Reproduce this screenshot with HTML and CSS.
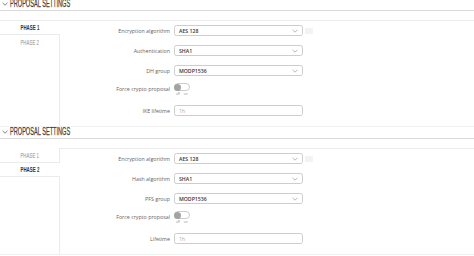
FILE: index.html
```html
<!DOCTYPE html>
<html>
<head>
<meta charset="utf-8">
<link rel="stylesheet" href="styles.css">
</head>
<body>
<section class="sec">
  <div class="sec-head">
    <svg class="chev" width="6" height="4" viewBox="0 0 6 4"><path d="M0.5 0.8 L3 3.2 L5.5 0.8" fill="none" stroke="#777" stroke-width="0.9"/></svg>
    <span class="title">PROPOSAL SETTINGS</span>
  </div>
  <div class="wrap">
    <div class="tabs">
      <div class="tab active"><span class="tab-txt">PHASE 1</span></div>
      <div class="tab"><span class="tab-txt">PHASE 2</span></div>
      <div class="tab-fill"></div>
    </div>
    <div class="panel">
      <div class="row"><span class="lbl">Encryption algorithm</span><div class="select"><span>AES 128</span><svg class="dd" width="6" height="4" viewBox="0 0 6 4"><path d="M0.6 0.8 L3 3.2 L5.4 0.8" fill="none" stroke="#9a9a9a" stroke-width="0.7"/></svg></div><span class="hint"></span></div>
      <div class="row"><span class="lbl">Authentication</span><div class="select"><span>SHA1</span><svg class="dd" width="6" height="4" viewBox="0 0 6 4"><path d="M0.6 0.8 L3 3.2 L5.4 0.8" fill="none" stroke="#9a9a9a" stroke-width="0.7"/></svg></div></div>
      <div class="row"><span class="lbl">DH group</span><div class="select"><span>MODP1536</span><svg class="dd" width="6" height="4" viewBox="0 0 6 4"><path d="M0.6 0.8 L3 3.2 L5.4 0.8" fill="none" stroke="#9a9a9a" stroke-width="0.7"/></svg></div></div>
      <div class="row row-toggle"><span class="lbl">Force crypto proposal</span><div class="toggle-box"><div class="toggle"><span class="knob"></span></div><div class="onoff"><span>off</span><span>on</span></div></div></div>
      <div class="row"><span class="lbl">IKE lifetime</span><div class="input">1h</div></div>
    </div>
  </div>
</section>
<section class="sec sec2">
  <div class="sec-head">
    <svg class="chev" width="6" height="4" viewBox="0 0 6 4"><path d="M0.5 0.8 L3 3.2 L5.5 0.8" fill="none" stroke="#777" stroke-width="0.9"/></svg>
    <span class="title">PROPOSAL SETTINGS</span>
  </div>
  <div class="wrap">
    <div class="tabs">
      <div class="tab"><span class="tab-txt">PHASE 1</span></div>
      <div class="tab active"><span class="tab-txt">PHASE 2</span></div>
      <div class="tab-fill"></div>
    </div>
    <div class="panel">
      <div class="row"><span class="lbl">Encryption algorithm</span><div class="select"><span>AES 128</span><svg class="dd" width="6" height="4" viewBox="0 0 6 4"><path d="M0.6 0.8 L3 3.2 L5.4 0.8" fill="none" stroke="#9a9a9a" stroke-width="0.7"/></svg></div><span class="hint"></span></div>
      <div class="row"><span class="lbl">Hash algorithm</span><div class="select"><span>SHA1</span><svg class="dd" width="6" height="4" viewBox="0 0 6 4"><path d="M0.6 0.8 L3 3.2 L5.4 0.8" fill="none" stroke="#9a9a9a" stroke-width="0.7"/></svg></div></div>
      <div class="row"><span class="lbl">PFS group</span><div class="select"><span>MODP1536</span><svg class="dd" width="6" height="4" viewBox="0 0 6 4"><path d="M0.6 0.8 L3 3.2 L5.4 0.8" fill="none" stroke="#9a9a9a" stroke-width="0.7"/></svg></div></div>
      <div class="row row-toggle"><span class="lbl">Force crypto proposal</span><div class="toggle-box"><div class="toggle"><span class="knob"></span></div><div class="onoff"><span>off</span><span>on</span></div></div></div>
      <div class="row"><span class="lbl">Lifetime</span><div class="input">1h</div></div>
    </div>
  </div>
</section>
</body>
</html>
```
FILE: styles.css
```css
html, body {
  margin: 0;
  padding: 0;
  background: #ffffff;
}
body {
  font-family: "Open Sans", "Liberation Sans", sans-serif;
  width: 474px;
  height: 256px;
  overflow: hidden;
}
.sec-head {
  display: flex;
  align-items: flex-end;
  padding-bottom: 2px;
  box-sizing: border-box;
  border-bottom: 1px solid #d9d9d9;
  height: 11px;
}
.sec2 .sec-head {
  margin-top: 1px;
}
.chev {
  margin-left: 2px;
  margin-right: 2px;
  margin-bottom: 2px;
}
.title {
  display: inline-block;
  font-family: "Liberation Sans", Arial, sans-serif;
  font-size: 10px;
  line-height: 9px;
  color: #3f3f3f;
  -webkit-text-stroke: 0.25px #3f3f3f;
  transform: scaleX(0.56);
  transform-origin: left center;
  white-space: nowrap;
}
.wrap {
  display: flex;
  margin-top: 9px;
  border-bottom: 1px solid #f0f0f0;
}
.tabs {
  width: 60px;
  display: flex;
  flex-direction: column;
  flex-shrink: 0;
}
.tab {
  height: 14px;
  display: flex;
  align-items: center;
  justify-content: center;
  border-right: 1px solid #ebebeb;
  box-sizing: border-box;
}
.tab.active {
  border-right: none;
  border-top: 1px solid #ebebeb;
  border-bottom: 1px solid #ebebeb;
  height: 15px;
}
.tab-txt {
  display: inline-block;
  font-family: "Liberation Sans", Arial, sans-serif;
  font-size: 6.5px;
  line-height: 7px;
  color: #8f8f8f;
  transform: scaleX(0.68);
  white-space: nowrap;
}
.tab.active .tab-txt {
  font-weight: bold;
  color: #333333;
}
.tab-fill {
  flex: 1;
  border-right: 1px solid #ebebeb;
}
.panel {
  flex: 1;
  border-top: 1px solid #ebebeb;
  padding: 4px 0 10px 0;
  display: flex;
  flex-direction: column;
  gap: 9px;
}
.row {
  height: 11px;
  display: flex;
  align-items: center;
}
.lbl {
  width: 110px;
  margin-right: 4px;
  text-align: right;
  font-size: 5.3px;
  color: #5f5f5f;
  white-space: nowrap;
}
.select, .input {
  width: 129px;
  height: 11px;
  box-sizing: border-box;
  border: 1px solid #cdcdcd;
  border-radius: 2.5px;
  padding: 0 4px 0 4px;
  display: flex;
  align-items: center;
  justify-content: space-between;
  font-size: 5.2px;
  font-weight: 600;
  color: #333333;
}
.input {
  font-weight: normal;
  color: #aaaaaa;
}
.dd {
  display: block;
}
.hint {
  width: 8px;
  height: 6px;
  margin-left: 2px;
  background: #f3f3f3;
}
.row-toggle {
  align-items: flex-start;
}
.toggle-box {
  display: flex;
  flex-direction: column;
  margin-top: -2px;
}
.toggle {
  width: 16px;
  height: 8px;
  box-sizing: border-box;
  border: 1px solid #cccccc;
  border-radius: 4px;
  background: #ffffff;
  display: flex;
  align-items: center;
}
.knob {
  width: 7px;
  height: 7px;
  border-radius: 50%;
  background: #a3a3a3;
  margin-left: -1px;
}
.onoff {
  display: flex;
  gap: 4px;
  font-size: 3px;
  line-height: 4px;
  color: #888888;
  padding-left: 2px;
  margin-top: 1px;
}
```
